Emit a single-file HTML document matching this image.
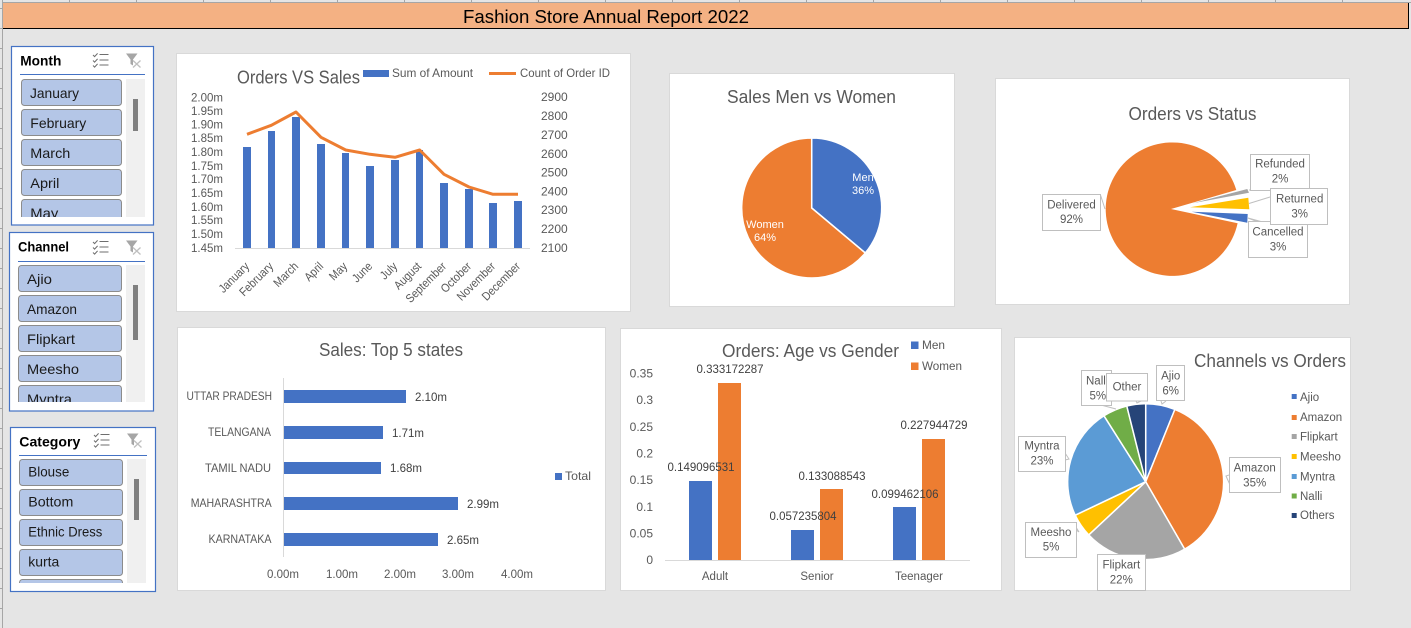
<!DOCTYPE html>
<html lang="en">
<head>
<meta charset="utf-8">
<title>Fashion Store Annual Report 2022</title>
<style>
html,body{margin:0;padding:0;width:1411px;height:628px;overflow:hidden;background:#e5e5e5}
svg{display:block}
text{font-family:"Liberation Sans",sans-serif;fill:#595959;font-size:12px}
.card{fill:#fff;stroke:#d9d9d9;stroke-width:1}
.title{font-size:18px;fill:#595959}
.btn{fill:#b4c6e7;stroke:#8c8c8c;stroke-width:1}
.st{font-size:14px;fill:#1a1a1a}
.sh{font-size:14px;font-weight:bold;fill:#000}
.sl{fill:#fff;stroke:#4472c4;stroke-width:1.2}
.lb{fill:#fff;stroke:#bfbfbf;stroke-width:1}
.ld{fill:none;stroke:#bfbfbf;stroke-width:1}
.m{text-anchor:middle}
.e{text-anchor:end}
.d{fill:#404040}
.w{fill:#fff;font-size:11px;text-anchor:middle}
.chk{fill:none;stroke:#6e6e6e;stroke-width:1}
</style>
</head>
<body>
<svg width="1411" height="628" viewBox="0 0 1411 628" xmlns="http://www.w3.org/2000/svg">
<defs>
<clipPath id="c1"><rect x="15" y="78" width="110" height="139"/></clipPath>
<clipPath id="c2"><rect x="15" y="264" width="110" height="138"/></clipPath>
<clipPath id="c3"><rect x="15" y="458" width="110" height="125"/></clipPath>
<g id="icons">
<path class="chk" d="M93 55l1.6 1.6 3-3.2M93 60.500l1.600 1.600 3-3.200M93 65.500l1.600 1.600 3-3.200M99.500 54.500h9M99.500 60h9M99.500 65h9"/>
<path d="M126 53.500h11.500l-4.500 6v6l-2.500-1.500v-4.500z" fill="#a6a6a6"/>
<path d="M133 60.500l7.500 7M140.500 60.500l-7.500 7" stroke="#bfbfbf" stroke-width="1.300" fill="none"/>
</g>
</defs>

<rect width="1411" height="628" fill="#e5e5e5"/>

<!-- sheet grid remnants -->
<rect x="2" y="2" width="1409" height="1" fill="#a6a6a6"/>
<path d="M69.500 0V3M136.500 0V3M203.500 0V3M270.500 0V3M337.500 0V3M404.500 0V3M471.500 0V3M538.500 0V3M605.500 0V3M672.500 0V3M739.500 0V3M806.500 0V3M873.500 0V3M940.500 0V3M1007.500 0V3M1074.500 0V3M1141.500 0V3M1208.500 0V3M1275.500 0V3M1342.500 0V3" stroke="#a6a6a6" fill="none"/>
<rect x="2" y="0" width="1" height="628" fill="#a6a6a6"/>
<path d="M0 8.500H2M0 28.500H2M0 48.500H2M0 68.500H2M0 88.500H2M0 108.500H2M0 128.500H2M0 148.500H2M0 168.500H2M0 188.500H2M0 208.500H2M0 228.500H2M0 248.500H2M0 268.500H2M0 288.500H2M0 308.500H2M0 328.500H2M0 348.500H2M0 368.500H2M0 388.500H2M0 408.500H2M0 428.500H2M0 448.500H2M0 468.500H2M0 488.500H2M0 508.500H2M0 528.500H2M0 548.500H2M0 568.500H2M0 588.500H2M0 608.500H2" stroke="#a6a6a6" fill="none"/>

<!-- header -->
<rect x="3" y="3" width="1405" height="25" fill="#f4b183"/>
<rect x="3" y="28" width="1406" height="1" fill="#000"/>
<rect x="1408" y="3" width="1" height="26" fill="#000"/>
<text x="463" y="23" style="font-size:18px;fill:#000" textLength="286" lengthAdjust="spacingAndGlyphs">Fashion Store Annual Report 2022</text>

<!-- Month slicer -->
<rect class="sl" x="11.500" y="46.500" width="142" height="178.500"/>
<text class="sh" x="20.300" y="65.500" textLength="41" lengthAdjust="spacingAndGlyphs">Month</text>
<use href="#icons"/>
<rect x="20" y="74" width="125" height="1" fill="#4472c4"/>
<rect x="126" y="79" width="19" height="138" fill="#f0f0f0"/>
<rect x="133" y="99" width="5" height="32" fill="#808080"/>
<g clip-path="url(#c1)">
<rect class="btn" x="21.500" y="79.500" width="100" height="26" rx="3"/>
<rect class="btn" x="21.500" y="109.500" width="100" height="26" rx="3"/>
<rect class="btn" x="21.500" y="139.500" width="100" height="26" rx="3"/>
<rect class="btn" x="21.500" y="169.500" width="100" height="26" rx="3"/>
<rect class="btn" x="21.500" y="199.500" width="100" height="26" rx="3"/>
<text class="st" x="30" y="98" textLength="49" lengthAdjust="spacingAndGlyphs">January</text>
<text class="st" x="30.300" y="128" textLength="56" lengthAdjust="spacingAndGlyphs">February</text>
<text class="st" x="30.300" y="158" textLength="40" lengthAdjust="spacingAndGlyphs">March</text>
<text class="st" x="30.300" y="188" textLength="29" lengthAdjust="spacingAndGlyphs">April</text>
<text class="st" x="30.300" y="218" textLength="28" lengthAdjust="spacingAndGlyphs">May</text>
</g>

<!-- Channel slicer -->
<rect class="sl" x="9.500" y="232.500" width="144" height="178.500"/>
<text class="sh" x="18" y="251.700" textLength="51" lengthAdjust="spacingAndGlyphs">Channel</text>
<use href="#icons" transform="translate(0 187)"/>
<rect x="18" y="261" width="127" height="1" fill="#4472c4"/>
<rect x="126" y="265" width="19" height="137" fill="#f0f0f0"/>
<rect x="133" y="285" width="5" height="55" fill="#808080"/>
<g clip-path="url(#c2)">
<rect class="btn" x="18.500" y="265.500" width="103" height="26" rx="3"/>
<rect class="btn" x="18.500" y="295.500" width="103" height="26" rx="3"/>
<rect class="btn" x="18.500" y="325.500" width="103" height="26" rx="3"/>
<rect class="btn" x="18.500" y="355.500" width="103" height="26" rx="3"/>
<rect class="btn" x="18.500" y="385.500" width="103" height="26" rx="3"/>
<text class="st" x="27" y="284" textLength="25" lengthAdjust="spacingAndGlyphs">Ajio</text>
<text class="st" x="27" y="314" textLength="50" lengthAdjust="spacingAndGlyphs">Amazon</text>
<text class="st" x="27" y="344" textLength="48" lengthAdjust="spacingAndGlyphs">Flipkart</text>
<text class="st" x="27" y="374" textLength="52" lengthAdjust="spacingAndGlyphs">Meesho</text>
<text class="st" x="27" y="404" textLength="45" lengthAdjust="spacingAndGlyphs">Myntra</text>
</g>

<!-- Category slicer -->
<rect class="sl" x="10.500" y="427.500" width="145" height="164"/>
<text class="sh" x="19.300" y="446.700" textLength="61" lengthAdjust="spacingAndGlyphs">Category</text>
<use href="#icons" transform="translate(1 380)"/>
<rect x="19" y="455" width="128" height="1" fill="#4472c4"/>
<rect x="127" y="459" width="19" height="124" fill="#f0f0f0"/>
<rect x="134" y="479" width="5" height="41" fill="#808080"/>
<g clip-path="url(#c3)">
<rect class="btn" x="19.500" y="459.500" width="103" height="26" rx="3"/>
<rect class="btn" x="19.500" y="489.500" width="103" height="26" rx="3"/>
<rect class="btn" x="19.500" y="519.500" width="103" height="26" rx="3"/>
<rect class="btn" x="19.500" y="549.500" width="103" height="26" rx="3"/>
<rect class="btn" x="19.500" y="579.500" width="103" height="26" rx="3"/>
<text class="st" x="28.300" y="476.700" textLength="41" lengthAdjust="spacingAndGlyphs">Blouse</text>
<text class="st" x="28.300" y="506.700" textLength="45" lengthAdjust="spacingAndGlyphs">Bottom</text>
<text class="st" x="28.300" y="536.700" textLength="74" lengthAdjust="spacingAndGlyphs">Ethnic Dress</text>
<text class="st" x="28.300" y="566.700" textLength="31" lengthAdjust="spacingAndGlyphs">kurta</text>
</g>

<!-- Orders VS Sales -->
<rect class="card" x="176.500" y="53.500" width="454" height="258"/>
<text class="title" x="237" y="83.500" textLength="123" lengthAdjust="spacingAndGlyphs">Orders VS Sales</text>
<rect x="363" y="70" width="26" height="7" fill="#4472c4"/>
<text x="392" y="77" textLength="81" lengthAdjust="spacingAndGlyphs">Sum of Amount</text>
<path d="M489 73.500H516" stroke="#ed7d31" stroke-width="3" fill="none"/>
<text x="520" y="77" textLength="90" lengthAdjust="spacingAndGlyphs">Count of Order ID</text>
<g>
<text x="191" y="101.500" textLength="32" lengthAdjust="spacingAndGlyphs">2.00m</text>
<text x="191" y="115" textLength="32" lengthAdjust="spacingAndGlyphs">1.95m</text>
<text x="191" y="128.500" textLength="32" lengthAdjust="spacingAndGlyphs">1.90m</text>
<text x="191" y="142" textLength="32" lengthAdjust="spacingAndGlyphs">1.85m</text>
<text x="191" y="156" textLength="32" lengthAdjust="spacingAndGlyphs">1.80m</text>
<text x="191" y="170" textLength="32" lengthAdjust="spacingAndGlyphs">1.75m</text>
<text x="191" y="183" textLength="32" lengthAdjust="spacingAndGlyphs">1.70m</text>
<text x="191" y="197" textLength="32" lengthAdjust="spacingAndGlyphs">1.65m</text>
<text x="191" y="211" textLength="32" lengthAdjust="spacingAndGlyphs">1.60m</text>
<text x="191" y="224" textLength="32" lengthAdjust="spacingAndGlyphs">1.55m</text>
<text x="191" y="238" textLength="32" lengthAdjust="spacingAndGlyphs">1.50m</text>
<text x="191" y="252" textLength="32" lengthAdjust="spacingAndGlyphs">1.45m</text>
</g>
<g>
<text x="541" y="101">2900</text>
<text x="541" y="120">2800</text>
<text x="541" y="139">2700</text>
<text x="541" y="158">2600</text>
<text x="541" y="176.500">2500</text>
<text x="541" y="195.500">2400</text>
<text x="541" y="214">2300</text>
<text x="541" y="233">2200</text>
<text x="541" y="252">2100</text>
</g>
<g fill="#4472c4">
<rect x="243" y="147" width="8" height="101"/>
<rect x="268" y="131" width="7" height="117"/>
<rect x="292" y="117" width="8" height="131"/>
<rect x="317" y="144" width="8" height="104"/>
<rect x="342" y="153" width="7" height="95"/>
<rect x="366" y="166" width="8" height="82"/>
<rect x="391" y="160" width="8" height="88"/>
<rect x="416" y="150" width="7" height="98"/>
<rect x="440" y="183" width="8" height="65"/>
<rect x="465" y="189" width="8" height="59"/>
<rect x="489" y="203" width="8" height="45"/>
<rect x="514" y="201" width="8" height="47"/>
</g>
<path d="M235 248.500H530" stroke="#d9d9d9" fill="none"/>
<polyline points="247,134.300 271.300,125.300 296,112 321,137.300 345.700,150 370,154.300 395,157.300 419.700,150 444,174.300 469,187 493,194.300 518,194.300" fill="none" stroke="#ed7d31" stroke-width="3" stroke-linejoin="round"/>
<g>
<text class="e" transform="translate(250 267) rotate(-45) scale(.88 1)">January</text>
<text class="e" transform="translate(274 267) rotate(-45) scale(.88 1)">February</text>
<text class="e" transform="translate(299 267) rotate(-45) scale(.88 1)">March</text>
<text class="e" transform="translate(324 267) rotate(-45) scale(.88 1)">April</text>
<text class="e" transform="translate(348 267) rotate(-45) scale(.88 1)">May</text>
<text class="e" transform="translate(373 267) rotate(-45) scale(.88 1)">June</text>
<text class="e" transform="translate(398 267) rotate(-45) scale(.88 1)">July</text>
<text class="e" transform="translate(422 267) rotate(-45) scale(.88 1)">August</text>
<text class="e" transform="translate(447 267) rotate(-45) scale(.88 1)">September</text>
<text class="e" transform="translate(472 267) rotate(-45) scale(.88 1)">October</text>
<text class="e" transform="translate(496 267) rotate(-45) scale(.88 1)">November</text>
<text class="e" transform="translate(521 267) rotate(-45) scale(.88 1)">December</text>
</g>

<!-- Sales Men vs Women -->
<rect class="card" x="669.500" y="73.500" width="285" height="233"/>
<text class="title" x="727" y="103" textLength="169" lengthAdjust="spacingAndGlyphs">Sales Men vs Women</text>
<path d="M811.700 208V138A70 70 0 0 1 865.300 253Z" fill="#4472c4" stroke="#fff" stroke-width="1.500"/>
<path d="M811.700 208L865.300 253A70 70 0 1 1 811.700 138Z" fill="#ed7d31" stroke="#fff" stroke-width="1.500"/>
<text class="w" x="863" y="181">Men</text>
<text class="w" x="863" y="194">36%</text>
<text class="w" x="765" y="228">Women</text>
<text class="w" x="765" y="241">64%</text>

<!-- Orders vs Status -->
<rect class="card" x="995.500" y="78.500" width="354" height="226"/>
<text class="title" x="1128.500" y="120" textLength="128" lengthAdjust="spacingAndGlyphs">Orders vs Status</text>
<path d="M1171 209L1236.300 190A66.700 66.700 0 1 0 1237.600 223.300Z" fill="#ed7d31"/>
<polygon points="1192.700,203.300 1247.300,189 1249,192.700" fill="#a5a5a5"/>
<polygon points="1190,207.300 1248.300,197.700 1249.300,209.300" fill="#ffc000"/>
<polygon points="1191.700,211.700 1247.700,214 1247.300,222.700" fill="#4472c4"/>
<path class="ld" d="M1105 209L1100.500 195M1249 190L1270 189M1249 203.500L1270 197M1248 218L1270 224M1248 218L1258 222"/>
<rect class="lb" x="1042.500" y="194.500" width="58" height="36"/>
<text class="m" x="1071.500" y="208.500" style="font-size:11.500px">Delivered</text>
<text class="m" x="1071.500" y="223" style="font-size:11.500px">92%</text>
<rect class="lb" x="1250.500" y="154.500" width="59" height="36"/>
<text class="m" x="1280" y="167.700" style="font-size:11.500px">Refunded</text>
<text class="m" x="1280" y="182.700" style="font-size:11.500px">2%</text>
<rect class="lb" x="1248.500" y="221.500" width="59" height="36"/>
<rect class="lb" x="1270.500" y="188.500" width="57" height="36"/>
<text class="m" x="1299.700" y="202.300" style="font-size:11.500px">Returned</text>
<text class="m" x="1299.700" y="217.300" style="font-size:11.500px">3%</text>
<text class="m" x="1278" y="235.700" style="font-size:11.500px">Cancelled</text>
<text class="m" x="1278" y="250.300" style="font-size:11.500px">3%</text>

<!-- Sales: Top 5 states -->
<rect class="card" x="177.500" y="327.500" width="428" height="263"/>
<text class="title" x="319" y="356" textLength="144" lengthAdjust="spacingAndGlyphs">Sales: Top 5 states</text>
<path d="M283.500 378V557" stroke="#d9d9d9" fill="none"/>
<g fill="#4472c4">
<rect x="284" y="390" width="122" height="13"/>
<rect x="284" y="426" width="99" height="13"/>
<rect x="284" y="462" width="97" height="12"/>
<rect x="284" y="497" width="174" height="13"/>
<rect x="284" y="533" width="154" height="13"/>
</g>
<text x="186.500" y="400" textLength="85.500" lengthAdjust="spacingAndGlyphs">UTTAR PRADESH</text>
<text x="208" y="436" textLength="63" lengthAdjust="spacingAndGlyphs">TELANGANA</text>
<text x="205" y="472" textLength="66" lengthAdjust="spacingAndGlyphs">TAMIL NADU</text>
<text x="190.700" y="507" textLength="81" lengthAdjust="spacingAndGlyphs">MAHARASHTRA</text>
<text x="208.500" y="543" textLength="63" lengthAdjust="spacingAndGlyphs">KARNATAKA</text>
<text class="d" x="415" y="401" textLength="32" lengthAdjust="spacingAndGlyphs">2.10m</text>
<text class="d" x="392" y="437" textLength="32" lengthAdjust="spacingAndGlyphs">1.71m</text>
<text class="d" x="390" y="472" textLength="32" lengthAdjust="spacingAndGlyphs">1.68m</text>
<text class="d" x="467" y="508" textLength="32" lengthAdjust="spacingAndGlyphs">2.99m</text>
<text class="d" x="447" y="544" textLength="32" lengthAdjust="spacingAndGlyphs">2.65m</text>
<text x="267" y="578" textLength="32" lengthAdjust="spacingAndGlyphs">0.00m</text>
<text x="326" y="578" textLength="32" lengthAdjust="spacingAndGlyphs">1.00m</text>
<text x="384" y="578" textLength="32" lengthAdjust="spacingAndGlyphs">2.00m</text>
<text x="442" y="578" textLength="32" lengthAdjust="spacingAndGlyphs">3.00m</text>
<text x="501" y="578" textLength="32" lengthAdjust="spacingAndGlyphs">4.00m</text>
<rect x="555" y="473" width="7" height="7" fill="#4472c4"/>
<text x="565" y="480" textLength="26" lengthAdjust="spacingAndGlyphs">Total</text>

<!-- Orders: Age vs Gender -->
<rect class="card" x="620.500" y="328.500" width="381" height="262"/>
<text class="title" x="722" y="357" textLength="177" lengthAdjust="spacingAndGlyphs">Orders: Age vs Gender</text>
<rect x="911" y="341.500" width="7.500" height="7.500" fill="#4472c4"/>
<text x="922" y="349" textLength="23" lengthAdjust="spacingAndGlyphs">Men</text>
<rect x="911" y="362.500" width="7.500" height="7.500" fill="#ed7d31"/>
<text x="922" y="370" textLength="40" lengthAdjust="spacingAndGlyphs">Women</text>
<text class="e" x="653" y="377.500">0.35</text>
<text class="e" x="653" y="404">0.3</text>
<text class="e" x="653" y="431">0.25</text>
<text class="e" x="653" y="457.500">0.2</text>
<text class="e" x="653" y="484">0.15</text>
<text class="e" x="653" y="511">0.1</text>
<text class="e" x="653" y="537.500">0.05</text>
<text class="e" x="653" y="564">0</text>
<g fill="#4472c4">
<rect x="689" y="481" width="23" height="79"/>
<rect x="791" y="530" width="23" height="30"/>
<rect x="893" y="507" width="23" height="53"/>
</g>
<g fill="#ed7d31">
<rect x="718" y="383" width="23" height="177"/>
<rect x="820" y="489" width="23" height="71"/>
<rect x="922" y="439" width="23" height="121"/>
</g>
<path d="M665 560.500H970" stroke="#d9d9d9" fill="none"/>
<text class="d" x="696.500" y="373" textLength="67" lengthAdjust="spacingAndGlyphs">0.333172287</text>
<text class="d" x="667.500" y="471" textLength="67" lengthAdjust="spacingAndGlyphs">0.149096531</text>
<text class="d" x="769.500" y="520" textLength="67" lengthAdjust="spacingAndGlyphs">0.057235804</text>
<text class="d" x="798.500" y="480" textLength="67" lengthAdjust="spacingAndGlyphs">0.133088543</text>
<text class="d" x="871.500" y="498" textLength="67" lengthAdjust="spacingAndGlyphs">0.099462106</text>
<text class="d" x="900.500" y="429" textLength="67" lengthAdjust="spacingAndGlyphs">0.227944729</text>
<text class="m" x="715" y="580" style="font-size:11.500px">Adult</text>
<text class="m" x="817" y="580" style="font-size:11.500px">Senior</text>
<text class="m" x="919" y="580" style="font-size:11.500px">Teenager</text>

<!-- Channels vs Orders -->
<rect class="card" x="1014.500" y="337.500" width="336" height="253"/>
<text class="title" x="1194" y="367" textLength="152" lengthAdjust="spacingAndGlyphs">Channels vs Orders</text>
<g stroke="#fff" stroke-width="1.500">
<path d="M1145.700 481.700V403.700A78 78 0 0 1 1174.900 409.400Z" fill="#4472c4"/>
<path d="M1145.700 481.700L1174.900 409.400A78 78 0 0 1 1184.700 549.200Z" fill="#ed7d31"/>
<path d="M1145.700 481.700L1184.700 549.200A78 78 0 0 1 1088.700 534.900Z" fill="#a5a5a5"/>
<path d="M1145.700 481.700L1088.700 534.900A78 78 0 0 1 1075.200 515.200Z" fill="#ffc000"/>
<path d="M1145.700 481.700L1075.200 515.200A78 78 0 0 1 1104 415.800Z" fill="#5b9bd5"/>
<path d="M1145.700 481.700L1104 415.800A78 78 0 0 1 1126.800 406Z" fill="#70ad47"/>
<path d="M1145.700 481.700L1126.800 406A78 78 0 0 1 1145.700 403.700Z" fill="#264478"/>
</g>
<path class="ld" d="M1161 401L1162 404L1166 401M1136 401L1137 403L1141 401M1101 405L1116 409M1229 475L1226 476L1231 487M1065 460L1069 459L1065 453M1076 530L1079 532L1074 524"/>
<rect class="lb" x="1156.500" y="365.500" width="28" height="35"/>
<text class="m" x="1170.700" y="379.300" style="font-size:11.500px">Ajio</text>
<text class="m" x="1170.700" y="394.300" style="font-size:11.500px">6%</text>
<rect class="lb" x="1081.500" y="370.500" width="30" height="35"/>
<text x="1086" y="384.700" style="font-size:11.500px">Nall</text>
<text x="1089.500" y="399.300" style="font-size:11.500px">5%</text>
<rect class="lb" x="1106.500" y="373.500" width="41" height="27.500"/>
<text class="m" x="1127" y="390.700" style="font-size:11.500px">Other</text>
<rect class="lb" x="1229.500" y="457.500" width="51" height="35"/>
<text class="m" x="1254.700" y="471.700" style="font-size:11.500px">Amazon</text>
<text class="m" x="1254.700" y="486.700" style="font-size:11.500px">35%</text>
<rect class="lb" x="1018.500" y="436.500" width="47" height="35"/>
<text class="m" x="1042" y="449.300" style="font-size:11.500px">Myntra</text>
<text class="m" x="1042" y="464.300" style="font-size:11.500px">23%</text>
<rect class="lb" x="1025.500" y="522.500" width="51" height="35"/>
<text class="m" x="1051" y="536" style="font-size:11.500px">Meesho</text>
<text class="m" x="1051" y="550.700" style="font-size:11.500px">5%</text>
<rect class="lb" x="1097.500" y="554.500" width="48" height="36"/>
<text class="m" x="1121.300" y="568.700" style="font-size:11.500px">Flipkart</text>
<text class="m" x="1121.300" y="583.300" style="font-size:11.500px">22%</text>
<rect x="1291.700" y="394" width="5" height="5" fill="#4472c4"/>
<rect x="1291.700" y="415" width="5" height="5" fill="#ed7d31"/>
<rect x="1291.700" y="434" width="5" height="5" fill="#a5a5a5"/>
<rect x="1291.700" y="454" width="5" height="5" fill="#ffc000"/>
<rect x="1291.700" y="474" width="5" height="5" fill="#5b9bd5"/>
<rect x="1291.700" y="493.500" width="5" height="5" fill="#70ad47"/>
<rect x="1291.700" y="513" width="5" height="5" fill="#264478"/>
<text x="1300" y="401" style="font-size:11.500px">Ajio</text>
<text x="1300" y="421" style="font-size:11.500px">Amazon</text>
<text x="1300" y="440.500" style="font-size:11.500px">Flipkart</text>
<text x="1300" y="460.500" style="font-size:11.500px">Meesho</text>
<text x="1300" y="480.500" style="font-size:11.500px">Myntra</text>
<text x="1300" y="500" style="font-size:11.500px">Nalli</text>
<text x="1300" y="519" style="font-size:11.500px">Others</text>
</svg>
</body>
</html>
